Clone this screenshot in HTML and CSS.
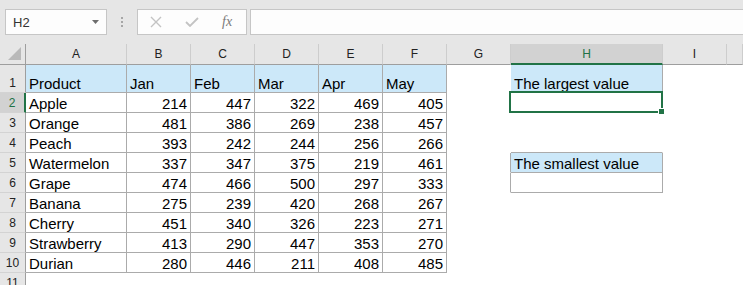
FILE: index.html
```html
<!DOCTYPE html>
<html lang="en">
<head>
    <meta charset="UTF-8">
    <title>Largest and smallest value</title>
    <link rel="stylesheet" href="styles.css">
</head>
<body>
    <div class="topbar">
        <div class="namebox">
            <span>H2</span>
            <svg width="7" height="4" viewBox="0 0 7 4"><polygon points="0,0 7,0 3.5,4" fill="#6d6d6d"/></svg>
        </div>
        <div class="grip"></div>
        <div class="fxbox">
            <svg width="12" height="12" viewBox="0 0 12 12"><path d="M1 1 L11 11 M11 1 L1 11" stroke="#c3c3c3" stroke-width="1.4" fill="none"/></svg>
            <svg width="14" height="10" viewBox="0 0 14 10"><path d="M1 5 L5 9 L13 1" stroke="#c3c3c3" stroke-width="1.8" fill="none"/></svg>
            <span class="fx">fx</span>
        </div>
        <div class="formula"></div>
    </div>

    <div class="sheet" id="sheet"></div>

    <script>
        const data = [
            ['Product', 'Jan', 'Feb', 'Mar', 'Apr', 'May'],
            ['Apple', 214, 447, 322, 469, 405],
            ['Orange', 481, 386, 269, 238, 457],
            ['Peach', 393, 242, 244, 256, 266],
            ['Watermelon', 337, 347, 375, 219, 461],
            ['Grape', 474, 466, 500, 297, 333],
            ['Banana', 275, 239, 420, 268, 267],
            ['Cherry', 451, 340, 326, 223, 271],
            ['Strawberry', 413, 290, 447, 353, 270],
            ['Durian', 280, 446, 211, 408, 485]
        ];

        function cell(cls, text) {
            return `<div class="${cls}">${text === undefined ? '' : text}</div>`;
        }

        let html = '<div class="ch corner"><svg width="14" height="14" viewBox="0 0 14 14"><polygon points="13,0 13,13 0,13" fill="#b9b9b9"/></svg></div>';
        ['A', 'B', 'C', 'D', 'E', 'F', 'G', 'H', 'I', ''].forEach(l => {
            html += cell(l === 'H' ? 'ch sel' : 'ch', l);
        });

        for (let r = 1; r <= 11; r++) {
            html += cell(r === 2 ? 'rh sel' : 'rh', r);
            const row = data[r - 1];
            for (let c = 0; c < 6; c++) {
                if (!row) { html += cell('cell'); continue; }
                let cls = 'cell bd';
                if (r === 1) cls += ' blue';
                else if (c > 0) cls += ' num';
                html += cell(cls, row[c]);
            }
            // column G
            html += cell(r === 5 || r === 6 ? 'cell bl' : 'cell');
            // column H
            if (r === 1) html += cell('cell blue bd', 'The largest value');
            else if (r === 2) html += '<div class="cell active"><div class="selbox"><div class="handle"></div></div></div>';
            else if (r === 4) html += cell('cell bb');
            else if (r === 5) html += cell('cell blue bd', 'The smallest value');
            else if (r === 6) html += cell('cell bd');
            else html += cell('cell');
            // columns I and J
            html += cell('cell') + cell('cell');
        }

        document.getElementById('sheet').innerHTML = html;
    </script>
</body>
</html>
```

FILE: styles.css
```css
* {
    box-sizing: border-box;
}

body {
    margin: 0;
    width: 743px;
    height: 285px;
    overflow: hidden;
    font-family: "Liberation Sans", Arial, sans-serif;
    background: #ffffff;
    color: #000000;
}

/* formula bar */
.topbar {
    height: 44px;
    background: #e6e6e6;
    display: flex;
    align-items: flex-start;
    padding: 9px 0 0 5px;
}

.namebox {
    width: 102px;
    height: 26px;
    background: #fdfdfd;
    border: 1px solid #c6c6c6;
    display: flex;
    align-items: center;
    justify-content: space-between;
    padding: 0 7px 0 7px;
    font-size: 13px;
    color: #333333;
}

.grip {
    width: 2px;
    height: 10px;
    margin: 8px 14px 0 14px;
    background: repeating-linear-gradient(#a6a6a6 0 2px, transparent 2px 4px);
}

.fxbox {
    width: 110px;
    height: 26px;
    background: #fdfdfd;
    border: 1px solid #c6c6c6;
    display: flex;
    align-items: center;
    gap: 23px;
    padding-left: 12px;
}

.fx {
    font-family: "Liberation Serif", "Times New Roman", serif;
    font-style: italic;
    font-size: 14px;
    color: #7a7a7a;
}

.formula {
    flex: 1;
    height: 26px;
    margin-left: 3px;
    background: #fdfdfd;
    border: 1px solid #c6c6c6;
    border-right: none;
}

/* worksheet */
.sheet {
    display: grid;
    grid-template-columns: 26px 101px repeat(6, 64px) 152px 64px 1fr;
    grid-template-rows: 21px 28px repeat(10, 20px);
}

.sheet > div {
    border-right: 1px solid transparent;
    border-bottom: 1px solid transparent;
    display: flex;
    white-space: nowrap;
}

.ch {
    background: #e6e6e6;
    border-right-color: #cdcdcd !important;
    border-bottom-color: #9e9e9e !important;
    justify-content: center;
    align-items: center;
    font-size: 12px;
    color: #222222;
}

.ch.corner {
    border-right-color: #9e9e9e !important;
    justify-content: flex-end;
    align-items: flex-end;
    padding: 0 3px 3px 0;
}

.ch.sel {
    background: #d2d2d2;
    border-bottom: 2px solid #217346 !important;
    color: #217346;
}

.rh {
    background: #e6e6e6;
    border-right-color: #9e9e9e !important;
    border-bottom-color: #d3d3d3 !important;
    justify-content: center;
    align-items: flex-end;
    font-size: 12px;
    line-height: 17px;
    color: #222222;
}

.rh.sel {
    background: #d2d2d2;
    border-right: 2px solid #217346 !important;
    color: #217346;
}

.cell {
    align-items: flex-end;
    padding: 0 3px;
    font-size: 15px;
    line-height: 17px;
}

.cell.num {
    justify-content: flex-end;
}

.cell.blue {
    background: #cce8f9;
}

.cell.bd {
    border-right-color: #ababab;
    border-bottom-color: #ababab;
}

.cell.bl {
    border-right-color: #ababab;
}

.cell.bb {
    border-bottom-color: #ababab;
}

.cell.active {
    position: relative;
}

.selbox {
    position: absolute;
    left: -2px;
    top: -2px;
    right: -1px;
    bottom: -1px;
    border: 2px solid #217346;
}

.handle {
    position: absolute;
    right: -4px;
    bottom: -4px;
    width: 7px;
    height: 7px;
    background: #217346;
    border: 1px solid #ffffff;
}
```
